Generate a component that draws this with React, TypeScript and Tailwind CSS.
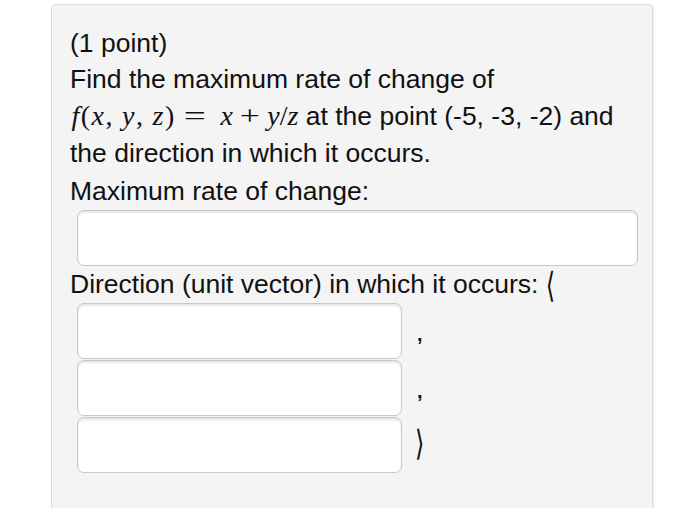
export default function App() {
  return (
    <div className="h-[508px] w-[700px] overflow-hidden bg-white pl-[51px] pt-[4px]">
      <div
        className="h-[540px] w-[602px] rounded-[5px] border border-[#dcdcdc] bg-[#f4f4f4] pl-[18px] pt-[20px] text-[26.5px] leading-[37px] text-[#111] shadow-[1px_1px_3px_rgba(0,0,0,0.08)]"
        style={{ fontFamily: '"Liberation Sans", Arial, sans-serif' }}
      >
        <p>(1 point)</p>
        <p className="-mt-[1px]">
          Find the maximum rate of change of
          <br />
          <Formula /> at the point (-5, -3, -2) and
          <br />
          the direction in which it occurs.
        </p>
        <p className="leading-[38px]">Maximum rate of change:</p>
        <div className="ml-[7px] h-[56px] w-[561px] rounded-[7px] border border-[#c8c8c8] bg-white shadow-[inset_0_2px_2px_rgba(0,0,0,0.1)]" />
        <p>
          Direction (unit vector) in which it occurs:{" "}
          <Angle ch="⟨" />
        </p>
        <div className="flex flex-col gap-[1px]">
          <Box after="," />
          <Box after="," />
          <Box after="⟩" />
        </div>
      </div>
    </div>
  );
}

function Angle({ ch }: { ch: string }) {
  return (
    <span
      className="inline-block origin-center scale-y-[1.45] text-[24px] leading-[20px]"
      style={{ fontFamily: '"DejaVu Sans", sans-serif' }}
    >
      {ch}
    </span>
  );
}

// variable in italic, with a bit of room on each side like the math font
function V({ c }: { c: string }) {
  return <i className="px-[1.5px]">{c}</i>;
}

function Formula() {
  const serif = { fontFamily: '"Liberation Serif", "Times New Roman", serif' };
  return (
    <span className="text-[28px] leading-[20px]" style={serif}>
      <V c="f" />(<V c="x" />,<span className="ml-[8px]" />
      <V c="y" />,<span className="ml-[8px]" />
      <V c="z" />)
      <span className="ml-[13px] inline-block scale-x-[1.4]">=</span>
      <span className="ml-[16px]" />
      <V c="x" />
      <span className="ml-[8px] inline-block scale-x-[1.27]">+</span>
      <span className="ml-[9px]" />
      <i>y</i>/<i>z</i>
    </span>
  );
}

function Box({ after }: { after: string }) {
  return (
    <div className="flex items-center">
      <div className="ml-[7px] h-[56px] w-[325px] rounded-[7px] border border-[#c8c8c8] bg-white shadow-[inset_0_2px_2px_rgba(0,0,0,0.1)]" />
      {after === "," ? (
        <span className="ml-[15px] mt-[6px] text-[20px] font-bold">,</span>
      ) : (
        <span className="ml-[13px] -mt-[5px]">
          <Angle ch={after} />
        </span>
      )}
    </div>
  );
}
